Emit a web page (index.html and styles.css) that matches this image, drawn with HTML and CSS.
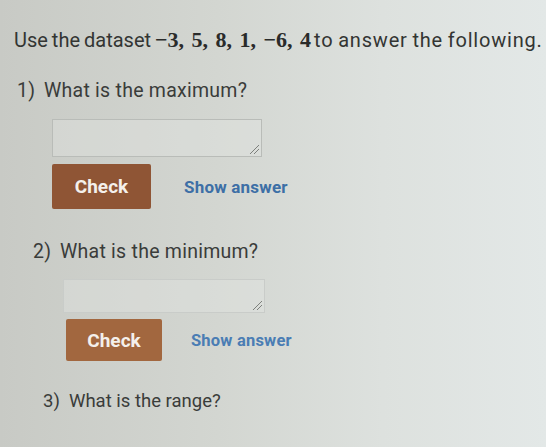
FILE: index.html
```html
<!DOCTYPE html>
<html>
<head>
<meta charset="utf-8">
<link rel="stylesheet" href="styles.css">
</head>
<body>
<div class="page">
  <p class="intro">Use the dataset <span class="math">−3, 5, 8, 1, −6, 4</span><span class="tail">to answer the following.</span></p>

  <section class="q q1">
    <p class="question"><span class="num">1)</span>What is the maximum?</p>
    <div class="answer">
      <div class="box"><span class="grip"></span></div>
      <div class="actions">
        <button class="check">Check</button>
        <span class="show">Show answer</span>
      </div>
    </div>
  </section>

  <section class="q q2">
    <p class="question"><span class="num">2)</span>What is the minimum?</p>
    <div class="answer">
      <div class="box"><span class="grip"></span></div>
      <div class="actions">
        <button class="check">Check</button>
        <span class="show">Show answer</span>
      </div>
    </div>
  </section>

  <section class="q q3">
    <p class="question"><span class="num">3)</span>What is the range?</p>
  </section>
</div>
</body>
</html>
```

FILE: styles.css
```css
html, body {
  margin: 0;
  padding: 0;
}
body {
  width: 546px;
  height: 447px;
  overflow: hidden;
  background: linear-gradient(90deg, #c8cac5 0%, #d3d6d1 40%, #dde1de 70%, #e3e8e7 100%);
  font-family: Roboto, "Noto Sans", sans-serif;
  color: #3a3b3a;
}
.page {
  padding: 27px 0 0 14px;
}
.intro {
  margin: 0;
  font-size: 20px;
  line-height: 26px;
  word-spacing: -1px;
  color: #333533;
  white-space: nowrap;
}
.math {
  font-family: "Liberation Serif", "DejaVu Serif", serif;
  font-weight: bold;
  font-size: 22px;
  word-spacing: 2px;
  color: #2a2b2a;
}
.tail {
  margin-left: 3px;
  letter-spacing: 0.8px;
}
.q {
  display: flex;
  flex-direction: column;
}
.question {
  margin: 0;
  font-size: 19.5px;
  line-height: 24px;
  letter-spacing: 0.25px;
  color: #3a3c3a;
}
.num {
  display: inline-block;
  width: 27px;
}
.q1 { margin: 26px 0 0 3px; }
.q2 { margin: 31px 0 0 19px; }
.q3 { margin: 28px 0 0 29px; }
.q3 .question {
  font-size: 18.5px;
  letter-spacing: 0;
}
.q3 .num { width: 26px; }
.answer {
  padding-left: 35px;
  display: flex;
  flex-direction: column;
}
.q2 .answer { padding-left: 30px; }
.box {
  position: relative;
  width: 208px;
  height: 36px;
  margin-top: 16px;
  border: 1px solid #b9bcb8;
  background: rgba(230, 232, 228, 0.35);
}
.q2 .box {
  width: 200px;
  height: 32px;
  margin-top: 15px;
  border-color: #c9ccc9;
}
.grip {
  position: absolute;
  right: 2px;
  bottom: 2px;
  width: 9px;
  height: 9px;
  background: linear-gradient(135deg, transparent 45%, #7d807c 45%, #7d807c 52%, transparent 52%, transparent 70%, #7d807c 70%, #7d807c 77%, transparent 77%);
}
.actions {
  display: flex;
  align-items: center;
  gap: 33px;
  margin-top: 7px;
}
.q2 .actions {
  margin-top: 6px;
  gap: 29px;
}
.check {
  width: 99px;
  height: 45px;
  border: none;
  border-radius: 2px;
  background: #8f5535;
  color: #f4f0ec;
  font-family: Roboto, "Noto Sans", sans-serif;
  font-weight: bold;
  font-size: 19px;
  padding: 0;
}
.q2 .check {
  width: 96px;
  height: 42px;
  background: #a2673f;
  margin-left: 3px;
}
.show {
  font-weight: bold;
  font-size: 17px;
  color: #3d6fa6;
  letter-spacing: 0.2px;
}
.q2 .show {
  font-size: 16.5px;
  color: #4a7db4;
}
```
